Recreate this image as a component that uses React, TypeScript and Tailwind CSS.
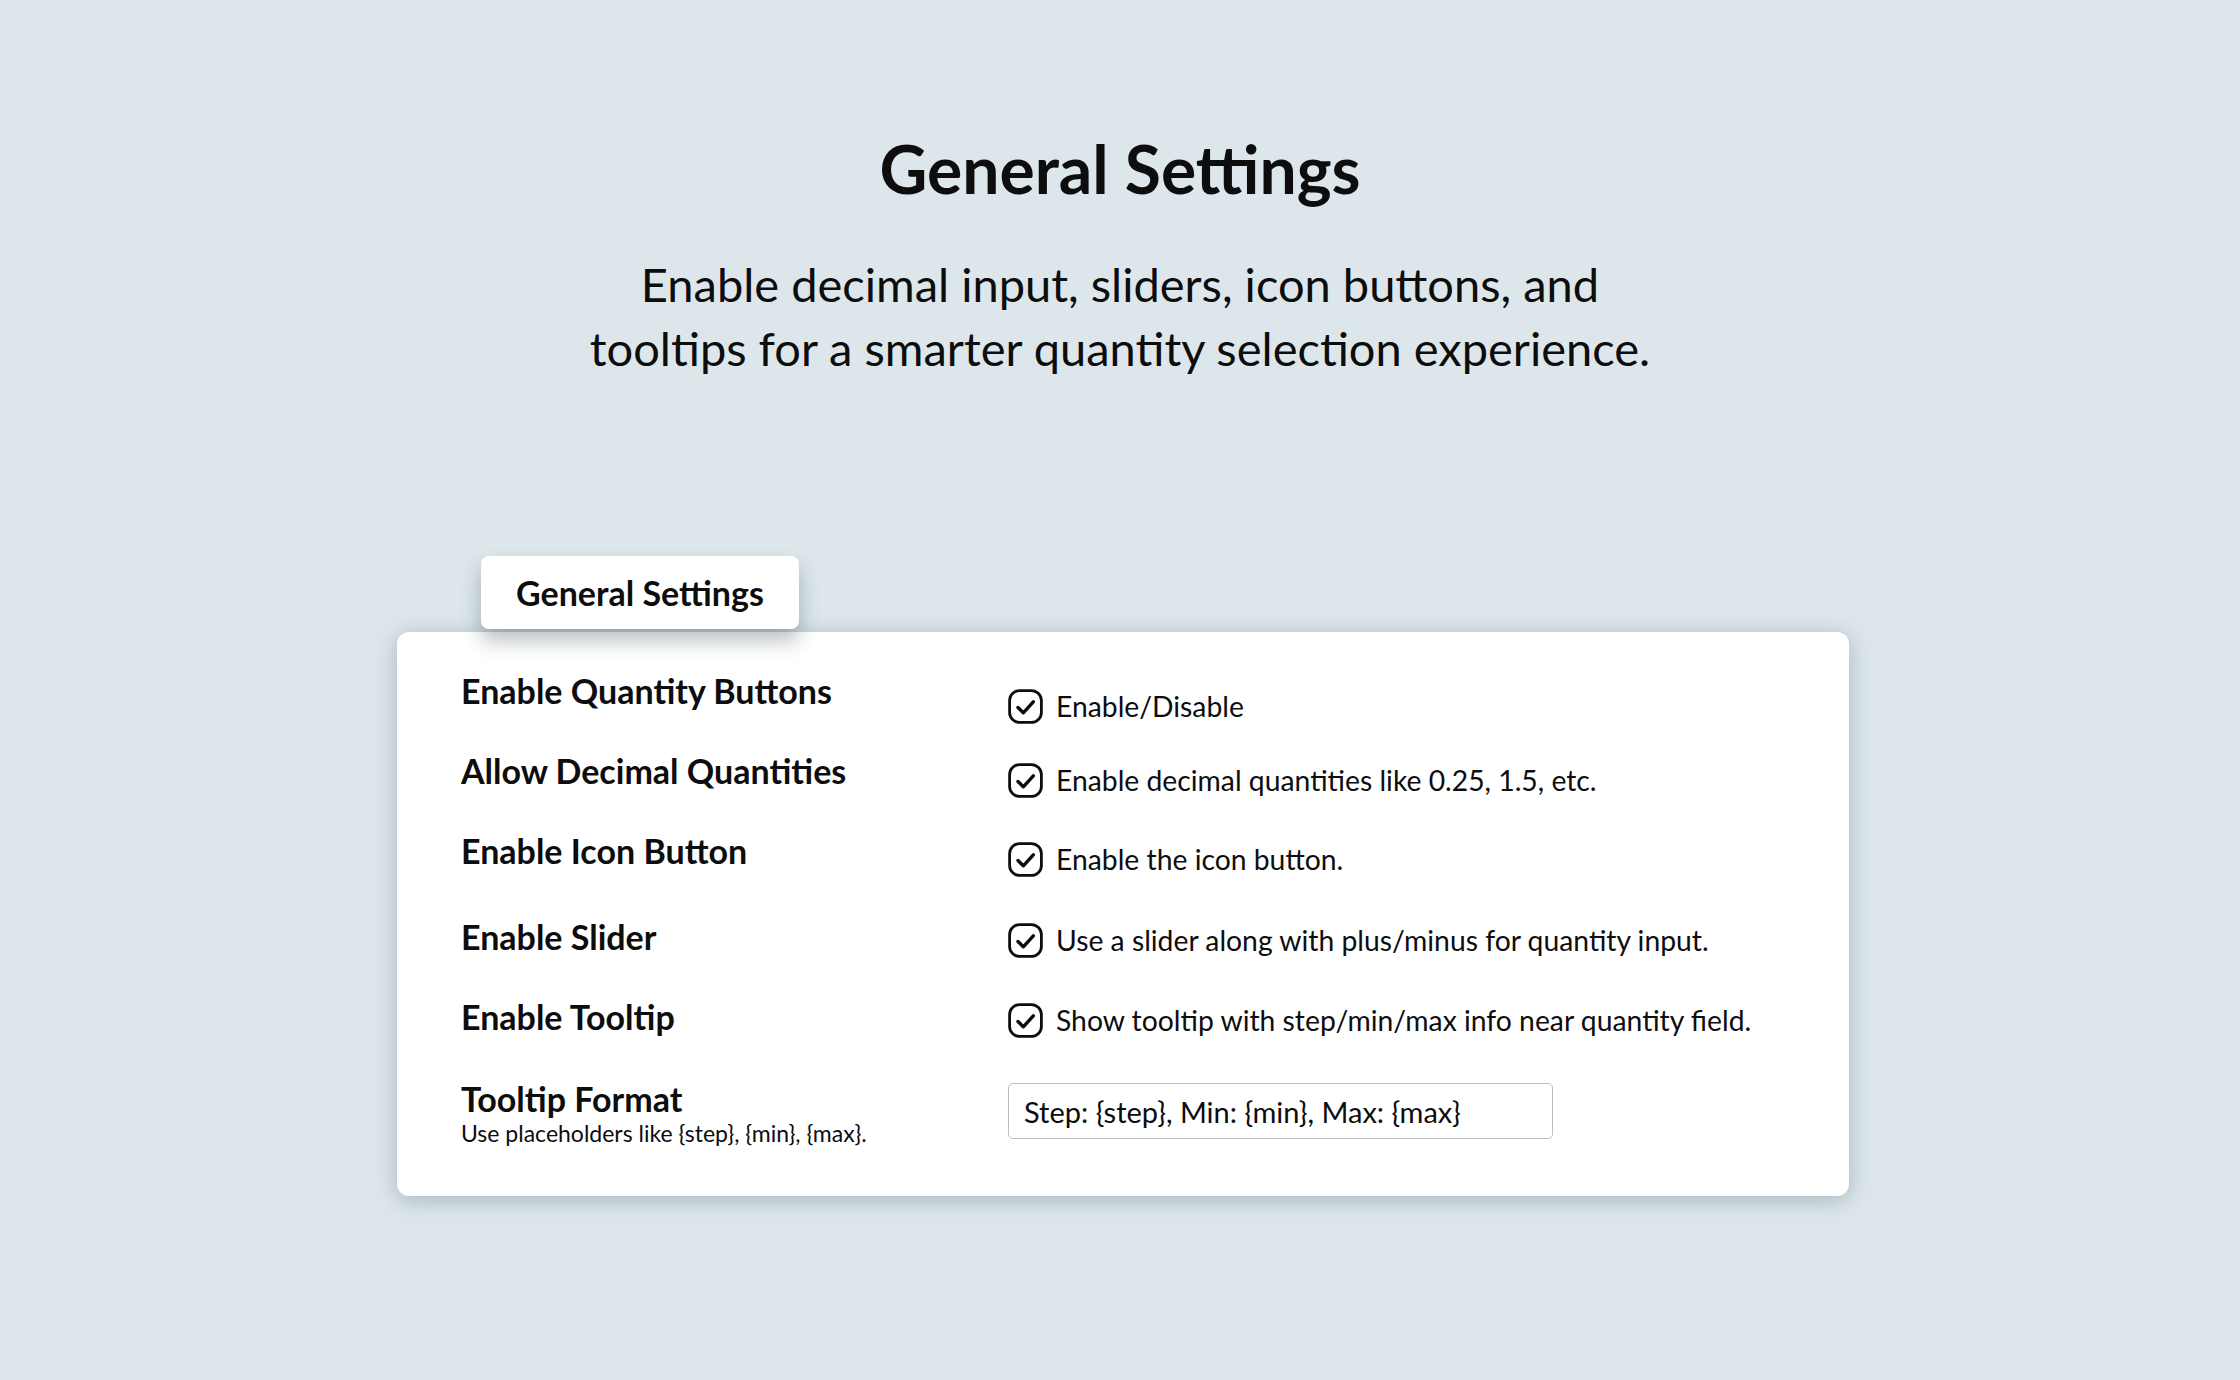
import type { ReactNode } from 'react';

type SettingRow = {
  label: string;
  description: string;
  rowClass: string;
  fieldClass: string;
};

const toggleRows: SettingRow[] = [
  {
    label: 'Enable Quantity Buttons',
    description: 'Enable/Disable',
    rowClass: 'h-[80px]',
    fieldClass: 'mt-[15px]',
  },
  {
    label: 'Allow Decimal Quantities',
    description: 'Enable decimal quantities like 0.25, 1.5, etc.',
    rowClass: 'h-[80px]',
    fieldClass: 'mt-[9px]',
  },
  {
    label: 'Enable Icon Button',
    description: 'Enable the icon button.',
    rowClass: 'h-[86px]',
    fieldClass: 'mt-[8px]',
  },
  {
    label: 'Enable Slider',
    description: 'Use a slider along with plus/minus for quantity input.',
    rowClass: 'h-[80px]',
    fieldClass: 'mt-[3px]',
  },
  {
    label: 'Enable Tooltip',
    description: 'Show tooltip with step/min/max info near quantity field.',
    rowClass: 'h-[82px]',
    fieldClass: 'mt-[3px]',
  },
];

function CheckIcon() {
  return (
    <svg
      width="35"
      height="35"
      viewBox="0 0 35 35"
      fill="none"
      stroke="currentColor"
      strokeLinecap="round"
      strokeLinejoin="round"
      className="shrink-0"
    >
      <rect x="1.6" y="1.6" width="31.8" height="31.8" rx="10" strokeWidth="2.8" />
      <path d="M10 18.5 15.3 23.8 25.3 12.8" strokeWidth="3.4" />
    </svg>
  );
}

function Row({
  label,
  rowClass,
  fieldClass,
  children,
}: {
  label: ReactNode;
  rowClass: string;
  fieldClass: string;
  children: ReactNode;
}) {
  return (
    <div className={`flex items-start ${rowClass}`}>
      <div className="w-[547px] shrink-0">{label}</div>
      <div className={fieldClass}>{children}</div>
    </div>
  );
}

export default function App() {
  return (
    <main
      className="min-h-screen bg-[#dde7eb] pt-[132px] text-[#0d0d0d]"
      style={{ fontFamily: 'Lato, "Noto Sans", sans-serif' }}
    >
      <h1 className="text-center text-[66px] font-bold leading-[74px]">
        General Settings
      </h1>
      <p className="mt-[46px] text-center text-[47px] leading-[64px]">
        Enable decimal input, sliders, icon buttons, and
        <br />
        tooltips for a smarter quantity selection experience.
      </p>

      <div className="ml-[397px] mt-[176px] w-[1452px]">
        <div className="relative z-10 mb-[3px] ml-[84px] inline-flex h-[73px] items-center rounded-lg bg-white px-[35px] text-[34px] font-bold shadow-[0_12px_20px_rgba(40,60,70,0.32)]">
          General Settings
        </div>

        <section className="rounded-xl bg-white pb-[49px] pl-[64px] pt-[39px] shadow-[0_4px_22px_rgba(60,85,95,0.34)]">
          {toggleRows.map((row) => (
            <Row
              key={row.label}
              rowClass={row.rowClass}
              fieldClass={row.fieldClass}
              label={
                <h2 className="text-[34px] font-bold leading-[40px]">
                  {row.label}
                </h2>
              }
            >
              <label className="flex items-center gap-[13px] text-[28.3px] leading-[40px]">
                <CheckIcon />
                <span>{row.description}</span>
              </label>
            </Row>
          ))}

          <Row
            rowClass=""
            fieldClass="mt-[4px]"
            label={
              <div>
                <h2 className="text-[34px] font-bold leading-[40px]">
                  Tooltip Format
                </h2>
                <p className="text-[23px] leading-[28px]">
                  Use placeholders like {'{step}'}, {'{min}'}, {'{max}'}.
                </p>
              </div>
            }
          >
            <input
              type="text"
              defaultValue="Step: {step}, Min: {min}, Max: {max}"
              className="h-[56px] w-[545px] rounded-[5px] border-[1.5px] border-[#bdbdbd] bg-white px-[15px] text-[29px] text-[#0d0d0d] outline-none"
            />
          </Row>
        </section>
      </div>
    </main>
  );
}
